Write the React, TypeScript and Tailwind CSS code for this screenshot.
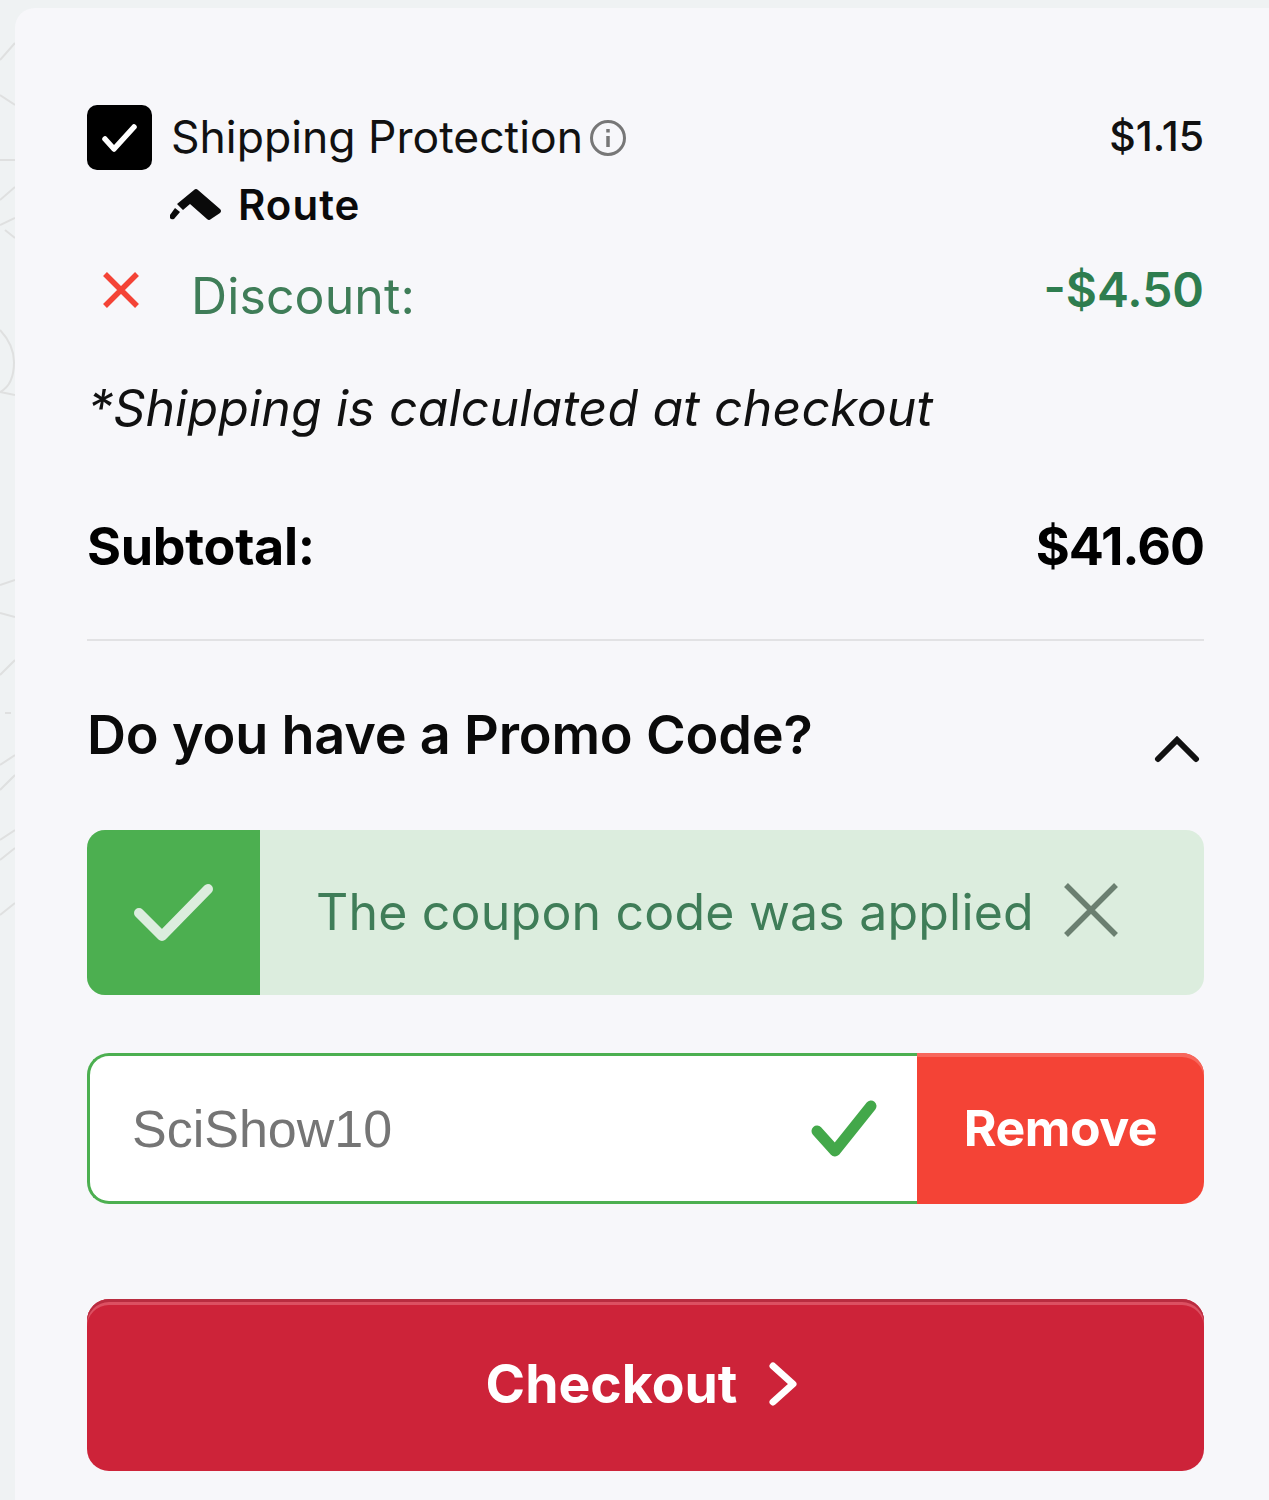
const sans = "font-['Inter','Liberation_Sans',sans-serif]";

function RouteLogo() {
  return (
    <svg width="52" height="32" viewBox="0 0 52 32" className="shrink-0">
      <path d="M24 1 Q26 -1 28 1 L50 20 Q52 22 50 24 L41 30 Q39 32 37 30 L20 15 L13 21 L7 15 Z" fill="#0a0a0a" />
      <path d="M0 26 L5 19 L10 23 L4 30 Q1 31 0 29 Z" fill="#0a0a0a" />
    </svg>
  );
}

function Squiggles() {
  return (
    <svg width="15" height="1000" viewBox="0 8 15 1000" fill="none" stroke="#dfe0e0" strokeWidth="2" className="block">
      <path d="M0 60 L15 43" />
      <path d="M0 95 L15 105" />
      <path d="M0 160 L15 160" />
      <path d="M0 200 L15 187" />
      <path d="M0 225 L15 218 M5 230 L15 238" />
      <path d="M0 330 Q14 345 14 362 Q14 385 0 392 L15 395" />
      <path d="M0 585 L15 580 M0 613 L15 617" />
      <path d="M0 675 L15 660" />
      <path d="M5 713 L11 713" />
      <path d="M0 765 L15 755 M0 790 L15 775" />
      <path d="M0 840 L15 830 M0 860 L15 848" />
      <path d="M0 915 L15 903" />
    </svg>
  );
}

export default function App() {
  return (
    <div className={`flex h-[1500px] w-[1269px] overflow-hidden bg-[#eff2f3] pt-2 ${sans}`}>
      <div className="w-[15px] shrink-0">
        <Squiggles />
      </div>
      <div className="flex-1 rounded-tl-[20px] bg-[#f7f7fa] pl-[72px] pr-[65px] pt-[97px]">
        <div className="flex items-start justify-between">
          <div>
            <div className="flex items-center">
              <div className="flex h-[65px] w-[65px] items-center justify-center rounded-[10px] bg-black">
                <svg width="36" height="30" viewBox="0 0 36 30" fill="none" stroke="white" strokeWidth="5.5" strokeLinecap="round" strokeLinejoin="round">
                  <path d="M3 16 L12 26 L32 4" />
                </svg>
              </div>
              <span className="mb-[2px] ml-[19px] text-[44.5px] leading-[62px] text-[#111]">Shipping Protection</span>
              <svg width="38" height="38" viewBox="0 0 38 38" fill="none" stroke="#777" className="ml-[6px]">
                <circle cx="19" cy="19" r="16.5" strokeWidth="3" />
                <path d="M19 17 V28" strokeWidth="3.5" />
                <path d="M19 10 V13.5" strokeWidth="3.5" />
              </svg>
            </div>
            <div className="ml-[83px] mt-[11px] flex items-center gap-[16px]">
              <RouteLogo />
              <span className="text-[42px] font-semibold leading-[48px] tracking-[1px] text-[#0a0a0a]">Route</span>
            </div>
          </div>
          <span className="mt-[6px] text-[41px] font-medium leading-[50px] text-[#111]">$1.15</span>
        </div>

        <div className="mt-[31px] flex items-start justify-between">
          <div className="flex items-start">
            <svg width="38" height="38" viewBox="0 0 38 38" fill="none" stroke="#f44336" strokeWidth="5.5" className="ml-[15px] mt-[11px]">
              <path d="M3 3 L35 35 M35 3 L3 35" />
            </svg>
            <span className="ml-[51px] mt-[6px] text-[50px] leading-[60px] tracking-[0.1px] text-[#3f7d58]">Discount:</span>
          </div>
          <span className="text-[48px] font-semibold leading-[60px] text-[#2e7d4f]">-$4.50</span>
        </div>

        <div className="mt-[52px] pl-[1px] text-[50px] italic leading-[60px] tracking-[0.15px] text-[#111]">*Shipping is calculated at checkout</div>

        <div className="mt-[79px] flex items-center justify-between border-b-2 border-[#e2e2e4] pb-[62px]">
          <span className="text-[52px] font-bold leading-[60px] tracking-[-0.3px] text-black">Subtotal:</span>
          <span className="text-[52px] font-bold leading-[60px] tracking-[-1px] text-black">$41.60</span>
        </div>

        <div className="mt-[64px] flex items-center justify-between">
          <span className="text-[54px] font-semibold leading-[60px] tracking-[-0.2px] text-[#0a0a0a]">Do you have a Promo Code?</span>
          <svg width="46" height="28" viewBox="0 0 46 28" fill="none" stroke="#111" strokeWidth="6" strokeLinecap="round" className="mr-[4px] mt-[28px]">
            <path d="M4 24 L23 5 L42 24" />
          </svg>
        </div>

        <div className="mt-[65px] flex h-[165px] overflow-hidden rounded-[18px] bg-[#dcedde]">
          <div className="flex w-[173px] items-center justify-center bg-[#4caf50]">
            <svg width="80" height="60" viewBox="0 0 80 60" fill="none" stroke="#dcedde" strokeWidth="10" strokeLinecap="round" strokeLinejoin="round">
              <path d="M5 30 L28 53 L74 6" />
            </svg>
          </div>
          <div className="flex flex-1 items-center pl-[56px]">
            <span className="mb-[2px] text-[50px] leading-[60px] tracking-[0.2px] text-[#3f7d58]">The coupon code was applied</span>
            <svg width="54" height="54" viewBox="0 0 54 54" fill="none" stroke="#6b7f70" strokeWidth="5.5" className="mb-[6px] ml-[30px]">
              <path d="M2 2 L52 52 M52 2 L2 52" />
            </svg>
          </div>
        </div>

        <div className="mt-[58px] flex h-[151px]">
          <div className="flex flex-1 items-center rounded-l-[22px] border-[3px] border-r-0 border-[#4caf50] bg-white pl-[42px] pr-[40px]">
            <span className="flex-1 font-['Liberation_Sans',sans-serif] text-[52px] text-[#757575]">SciShow10</span>
            <svg width="66" height="58" viewBox="0 0 66 58" fill="none" stroke="#43a84a" strokeWidth="11" strokeLinecap="round" strokeLinejoin="round">
              <path d="M6 31 L24 51 L60 6" />
            </svg>
          </div>
          <div className="flex w-[287px] items-center justify-center rounded-r-[22px] bg-[#f44336] text-[50px] font-bold tracking-[-0.5px] text-white shadow-[inset_0_4px_0_#f7675c]">Remove</div>
        </div>

        <div className="mt-[95px] flex h-[172px] items-center justify-center gap-[31px] rounded-[22px] bg-[#cd2339] pb-[2px] pr-[7px] shadow-[inset_0_3px_0_#b92c40,inset_0_6px_0_#dc5062]">
          <span className="text-[53.5px] font-bold text-white">Checkout</span>
          <svg width="30" height="44" viewBox="0 0 30 44" fill="none" stroke="white" strokeWidth="7" strokeLinecap="round" strokeLinejoin="round">
            <path d="M5 4 L25 22 L5 40" />
          </svg>
        </div>
      </div>
    </div>
  );
}
